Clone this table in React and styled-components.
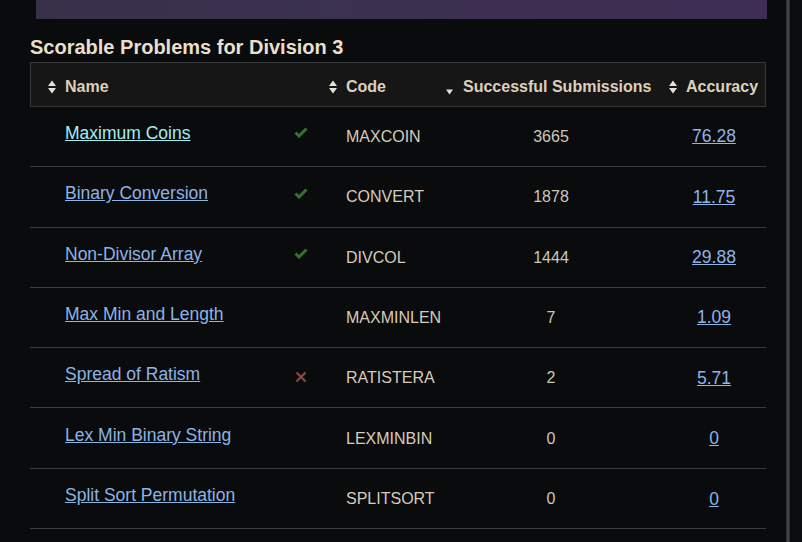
import React from "react";
import styled, { createGlobalStyle } from "styled-components";

const Global = createGlobalStyle`
  html, body { margin: 0; padding: 0; background: #0a0b0d; }
  body { font-family: "Liberation Sans", Arial, sans-serif; overflow: hidden; }
  #root { width: 802px; height: 542px; }
`;

const Page = styled.div`
  display: flex;
  width: 802px;
  height: 542px;
  background: #0a0b0d;
  overflow: hidden;
`;

const Main = styled.div`
  width: 786px;
  display: flex;
  flex-direction: column;
  padding-left: 30px;
  box-sizing: border-box;
`;

const Gutter = styled.div`
  width: 4px;
  background: linear-gradient(to right, #2a2b2e, #48494c 50%, #2c2d30);
`;

const Edge = styled.div`
  flex: 1;
  background: #0b0c0f;
`;

const Banner = styled.div`
  margin-left: 6px;
  width: 731px;
  height: 19px;
  background: linear-gradient(to right, #383049, #3b3150 40%, #3f2d53);
`;

const Title = styled.h2`
  margin: 16px 0 3px;
  font-size: 20px;
  line-height: 24px;
  font-weight: 700;
  color: #e9dfcc;
`;

const Table = styled.div`
  width: 736px;
  display: flex;
  flex-direction: column;
`;

const cols = "296px 114px 222px 104px";

const HeadRow = styled.div`
  display: grid;
  grid-template-columns: ${cols};
  height: 45px;
  box-sizing: border-box;
  border: 1px solid #383838;
  background: #161616;
  padding-top: 4px;
`;

const HeadCell = styled.div`
  display: flex;
  align-items: center;
  gap: ${(p) => p.$gap}px;
  padding-left: ${(p) => p.$pl}px;
  font-size: 16px;
  font-weight: 700;
  color: #ddd0bb;
  white-space: nowrap;
`;

const Row = styled.div`
  display: grid;
  grid-template-columns: ${cols};
  height: 60.3px;
  box-sizing: border-box;
  border-bottom: 1px solid #3c3c3c;
  padding-top: ${(p) => p.$shift}px;
`;

const NameCell = styled.div`
  display: flex;
  align-items: center;
  justify-content: space-between;
  padding: 0 18px 0 35px;
`;

const NameLink = styled.a`
  font-size: 17.5px;
  color: ${(p) => (p.$active ? "#a3eef0" : "#8cb4e4")};
  text-decoration: underline;
  margin-bottom: 7px;
  cursor: pointer;
`;

const IconBox = styled.span`
  display: flex;
  width: 14px;
  justify-content: center;
  margin-bottom: ${(p) => p.$mb}px;
`;

const CodeCell = styled.div`
  display: flex;
  align-items: center;
  padding-left: 20px;
  font-size: 16px;
  color: #d7cbbc;
`;

const NumCell = styled.div`
  display: flex;
  align-items: center;
  justify-content: center;
  font-size: 16px;
  color: #cfc6bb;
`;

const AccLink = styled.a`
  font-size: 17.5px;
  color: #8fb5e6;
  text-decoration: underline;
  cursor: pointer;
`;

const SortBoth = () => (
  <svg width="8" height="14" viewBox="0 0 8 14">
    <path d="M0 6 L4 0.5 L8 6 Z" fill="#e6e0d8" />
    <path d="M0 8 L8 8 L4 13.5 Z" fill="#e6e0d8" />
  </svg>
);

const SortDesc = () => (
  <svg width="7" height="14" viewBox="0 0 7 14" style={{ marginTop: 4 }}>
    <path d="M0 7.5 L7 7.5 L3.5 12.5 Z" fill="#e6e0d8" />
  </svg>
);

const Check = () => (
  <svg width="14" height="11" viewBox="0 0 14 11">
    <path d="M1.5 5.5 L5 9 L12.5 1.5" fill="none" stroke="#35722f" strokeWidth="3" />
  </svg>
);

const Cross = () => (
  <svg width="12" height="12" viewBox="0 0 12 12">
    <path d="M1.5 1.5 L10.5 10.5 M10.5 1.5 L1.5 10.5" fill="none" stroke="#874640" strokeWidth="2.4" />
  </svg>
);

const rows = [
  { name: "Maximum Coins", code: "MAXCOIN", subs: "3665", acc: "76.28", status: "ok", active: true, shift: 0 },
  { name: "Binary Conversion", code: "CONVERT", subs: "1878", acc: "11.75", status: "ok", shift: 1 },
  { name: "Non-Divisor Array", code: "DIVCOL", subs: "1444", acc: "29.88", status: "ok", shift: 1 },
  { name: "Max Min and Length", code: "MAXMINLEN", subs: "7", acc: "1.09", shift: 0 },
  { name: "Spread of Ratism", code: "RATISTERA", subs: "2", acc: "5.71", status: "bad", shift: 1 },
  { name: "Lex Min Binary String", code: "LEXMINBIN", subs: "0", acc: "0", shift: 1 },
  { name: "Split Sort Permutation", code: "SPLITSORT", subs: "0", acc: "0", shift: 2 },
];

export default function App() {
  return (
    <Page>
      <Global />
      <Main>
        <Banner />
        <Title>Scorable Problems for Division 3</Title>
        <Table>
          <HeadRow>
            <HeadCell $pl={17} $gap={9}><SortBoth />Name</HeadCell>
            <HeadCell $pl={2} $gap={9}><SortBoth />Code</HeadCell>
            <HeadCell $pl={5} $gap={10}><SortDesc />Successful Submissions</HeadCell>
            <HeadCell $pl={6} $gap={9}><SortBoth />Accuracy</HeadCell>
          </HeadRow>
          {rows.map((r) => (
            <Row key={r.code} $shift={r.shift}>
              <NameCell>
                <NameLink $active={r.active}>{r.name}</NameLink>
                {r.status === "ok" && <IconBox $mb={8}><Check /></IconBox>}
                {r.status === "bad" && <IconBox $mb={3}><Cross /></IconBox>}
              </NameCell>
              <CodeCell>{r.code}</CodeCell>
              <NumCell>{r.subs}</NumCell>
              <NumCell><AccLink>{r.acc}</AccLink></NumCell>
            </Row>
          ))}
        </Table>
      </Main>
      <Gutter />
      <Edge />
    </Page>
  );
}
